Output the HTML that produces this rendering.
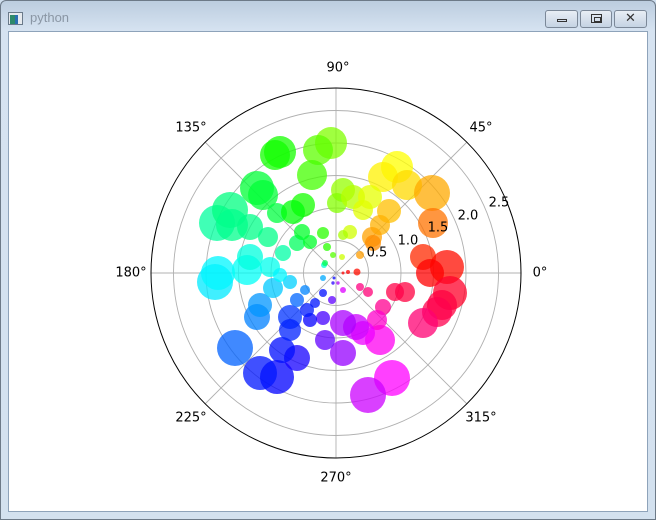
<!DOCTYPE html>
<html><head><style>
body{margin:0;width:656px;height:520px;overflow:hidden;background:#cfdeee;font-family:"DejaVu Sans","Liberation Sans",sans-serif}
.frame{position:absolute;left:0;top:0;width:654px;height:518px;border:1px solid #6d7a88;border-radius:6px 6px 0 0;background:linear-gradient(#bccddf,#d6e3f1 30px,#d3e1ef)}
.client{position:absolute;left:8px;top:31px;width:640px;height:481px;background:#fff;border:1px solid #8ea3ba;box-sizing:border-box}
.title{position:absolute;left:30px;top:10px;font:13px "Liberation Sans",sans-serif;color:#8a96a4}
.btn{position:absolute;top:10px;height:18px;border:1px solid #7b8898;border-radius:3px;background:linear-gradient(#e8eef5,#c5d3e3);box-sizing:border-box}
</style></head><body>
<div class="frame"></div>
<svg style="position:absolute;left:8px;top:12px" width="16" height="14"><rect x="0.5" y="0.5" width="14" height="12" fill="#e6eaee" stroke="#6a7a8a"/><rect x="2" y="3" width="5" height="9" fill="#2d8a6a"/><rect x="7" y="3" width="3" height="9" fill="#2a6fb0"/></svg>
<div class="title">python</div>
<div class="btn" style="left:545px;width:33px"><div style="position:absolute;left:11px;top:8px;width:10px;height:3px;border:1px solid #333;box-sizing:border-box"></div></div>
<div class="btn" style="left:580px;width:32px"><div style="position:absolute;left:10px;top:3px;width:11px;height:9px;border:1px solid #333;box-sizing:border-box"><div style="position:absolute;left:2px;top:2px;width:5px;height:3px;border:1px solid #333"></div></div></div>
<div class="btn" style="left:614px;width:33px;text-align:center;font:bold 13px 'DejaVu Sans';line-height:16px;color:#333">✕</div>
<div class="client"></div>
<svg style="position:absolute;left:0;top:0" width="656" height="520" font-family="DejaVu Sans, Liberation Sans, sans-serif" font-size="13">
<g fill="none" stroke="#b0b0b0" stroke-width="0.9">
<circle cx="336" cy="273" r="32.5"/><circle cx="336" cy="273" r="65"/><circle cx="336" cy="273" r="97.5"/><circle cx="336" cy="273" r="130"/><circle cx="336" cy="273" r="162.5"/>
<line x1="151" y1="273" x2="521" y2="273"/><line x1="336" y1="88" x2="336" y2="458"/>
<line x1="205" y1="142" x2="467" y2="404"/><line x1="205" y1="404" x2="467" y2="142"/>
</g>
<g>
<circle cx="280" cy="152" r="16" fill="hsla(115,100%,50%,.75)"/>
<circle cx="275" cy="155" r="15" fill="hsla(116,100%,50%,.75)"/>
<circle cx="331" cy="143" r="16" fill="hsla(90,100%,50%,.75)"/>
<circle cx="318" cy="150" r="15" fill="hsla(98,100%,50%,.75)"/>
<circle cx="312" cy="175" r="15" fill="hsla(104,100%,50%,.75)"/>
<circle cx="397" cy="167" r="16" fill="hsla(60,100%,50%,.75)"/>
<circle cx="383" cy="177" r="15" fill="hsla(57,100%,50%,.75)"/>
<circle cx="407" cy="185" r="15" fill="hsla(51,100%,50%,.75)"/>
<circle cx="432" cy="193" r="18" fill="hsla(40,100%,50%,.75)"/>
<circle cx="433" cy="223" r="15" fill="hsla(27,100%,50%,.75)"/>
<circle cx="389" cy="211" r="12" fill="hsla(45,100%,50%,.75)"/>
<circle cx="380" cy="225" r="10" fill="hsla(42,100%,50%,.75)"/>
<circle cx="372" cy="237" r="10" fill="hsla(38,100%,50%,.75)"/>
<circle cx="373" cy="243" r="8" fill="hsla(33,100%,50%,.75)"/>
<circle cx="423" cy="257" r="13" fill="hsla(10,100%,50%,.75)"/>
<circle cx="447" cy="267" r="17" fill="hsla(3,100%,50%,.75)"/>
<circle cx="430" cy="273" r="14" fill="hsla(0,100%,50%,.75)"/>
<circle cx="450" cy="293" r="17" fill="hsla(350,100%,50%,.75)"/>
<circle cx="442" cy="305" r="15" fill="hsla(345,100%,50%,.75)"/>
<circle cx="437" cy="312" r="15" fill="hsla(342,100%,50%,.75)"/>
<circle cx="423" cy="323" r="15" fill="hsla(333,100%,50%,.75)"/>
<circle cx="405" cy="292" r="10" fill="hsla(345,100%,50%,.75)"/>
<circle cx="395" cy="292" r="9" fill="hsla(343,100%,50%,.75)"/>
<circle cx="383" cy="307" r="8" fill="hsla(326,100%,50%,.75)"/>
<circle cx="380" cy="340" r="15" fill="hsla(303,100%,50%,.75)"/>
<circle cx="377" cy="320" r="10" fill="hsla(312,100%,50%,.75)"/>
<circle cx="392" cy="378" r="18" fill="hsla(300,100%,50%,.75)"/>
<circle cx="368" cy="395" r="18" fill="hsla(288,100%,50%,.75)"/>
<circle cx="363" cy="333" r="12" fill="hsla(296,100%,50%,.75)"/>
<circle cx="356" cy="327" r="13" fill="hsla(288,100%,50%,.75)"/>
<circle cx="343" cy="323" r="13" fill="hsla(280,100%,50%,.75)"/>
<circle cx="343" cy="353" r="13" fill="hsla(275,100%,50%,.75)"/>
<circle cx="325" cy="340" r="10" fill="hsla(263,100%,50%,.75)"/>
<circle cx="323" cy="318" r="7" fill="hsla(256,100%,50%,.75)"/>
<circle cx="332" cy="300" r="4" fill="hsla(262,100%,50%,.75)"/>
<circle cx="277" cy="377" r="17" fill="hsla(240,100%,50%,.75)"/>
<circle cx="260" cy="373" r="17" fill="hsla(235,100%,50%,.75)"/>
<circle cx="297" cy="358" r="13" fill="hsla(245,100%,50%,.75)"/>
<circle cx="282" cy="350" r="13" fill="hsla(237,100%,50%,.75)"/>
<circle cx="235" cy="348" r="18" fill="hsla(217,100%,50%,.75)"/>
<circle cx="290" cy="317" r="12" fill="hsla(228,100%,50%,.75)"/>
<circle cx="290" cy="330" r="11" fill="hsla(232,100%,50%,.75)"/>
<circle cx="310" cy="320" r="7" fill="hsla(241,100%,50%,.75)"/>
<circle cx="307" cy="310" r="7" fill="hsla(234,100%,50%,.75)"/>
<circle cx="257" cy="317" r="13" fill="hsla(210,100%,50%,.75)"/>
<circle cx="260" cy="305" r="12" fill="hsla(205,100%,50%,.75)"/>
<circle cx="297" cy="300" r="7" fill="hsla(216,100%,50%,.75)"/>
<circle cx="315" cy="303" r="5" fill="hsla(235,100%,50%,.75)"/>
<circle cx="323" cy="293" r="4" fill="hsla(237,100%,50%,.75)"/>
<circle cx="305" cy="290" r="5" fill="hsla(209,100%,50%,.75)"/>
<circle cx="215" cy="282" r="18" fill="hsla(185,100%,50%,.75)"/>
<circle cx="218" cy="273" r="17" fill="hsla(182,100%,50%,.75)"/>
<circle cx="247" cy="270" r="15" fill="hsla(178,100%,50%,.75)"/>
<circle cx="250" cy="257" r="13" fill="hsla(172,100%,50%,.75)"/>
<circle cx="270" cy="267" r="10" fill="hsla(176,100%,50%,.75)"/>
<circle cx="273" cy="288" r="10" fill="hsla(193,100%,50%,.75)"/>
<circle cx="290" cy="282" r="7" fill="hsla(191,100%,50%,.75)"/>
<circle cx="280" cy="275" r="7" fill="hsla(182,100%,50%,.75)"/>
<circle cx="323" cy="278" r="3" fill="hsla(200,100%,50%,.75)"/>
<circle cx="324" cy="265" r="3" fill="hsla(170,100%,50%,.75)"/>
<circle cx="217" cy="223" r="18" fill="hsla(157,100%,50%,.75)"/>
<circle cx="230" cy="210" r="18" fill="hsla(150,100%,50%,.75)"/>
<circle cx="232" cy="225" r="16" fill="hsla(153,100%,50%,.75)"/>
<circle cx="257" cy="188" r="17" fill="hsla(133,100%,50%,.75)"/>
<circle cx="263" cy="195" r="15" fill="hsla(133,100%,50%,.75)"/>
<circle cx="250" cy="227" r="13" fill="hsla(152,100%,50%,.75)"/>
<circle cx="277" cy="213" r="10" fill="hsla(135,100%,50%,.75)"/>
<circle cx="268" cy="237" r="10" fill="hsla(152,100%,50%,.75)"/>
<circle cx="283" cy="253" r="8" fill="hsla(159,100%,50%,.75)"/>
<circle cx="297" cy="243" r="8" fill="hsla(142,100%,50%,.75)"/>
<circle cx="302" cy="232" r="8" fill="hsla(130,100%,50%,.75)"/>
<circle cx="303" cy="205" r="12" fill="hsla(115,100%,50%,.75)"/>
<circle cx="293" cy="212" r="12" fill="hsla(122,100%,50%,.75)"/>
<circle cx="310" cy="242" r="7" fill="hsla(130,100%,50%,.75)"/>
<circle cx="323" cy="233" r="6" fill="hsla(110,100%,50%,.75)"/>
<circle cx="327" cy="247" r="4" fill="hsla(110,100%,50%,.75)"/>
<circle cx="333" cy="255" r="3" fill="hsla(100,100%,50%,.75)"/>
<circle cx="325" cy="263" r="3" fill="hsla(138,100%,50%,.75)"/>
<circle cx="343" cy="190" r="12" fill="hsla(85,100%,50%,.75)"/>
<circle cx="337" cy="203" r="10" fill="hsla(89,100%,50%,.75)"/>
<circle cx="353" cy="197" r="12" fill="hsla(77,100%,50%,.75)"/>
<circle cx="370" cy="197" r="12" fill="hsla(66,100%,50%,.75)"/>
<circle cx="363" cy="210" r="10" fill="hsla(67,100%,50%,.75)"/>
<circle cx="350" cy="232" r="7" fill="hsla(71,100%,50%,.75)"/>
<circle cx="343" cy="235" r="5" fill="hsla(80,100%,50%,.75)"/>
<circle cx="342" cy="257" r="3" fill="hsla(72,100%,50%,.75)"/>
<circle cx="360" cy="255" r="4" fill="hsla(37,100%,50%,.75)"/>
<circle cx="357" cy="272" r="3.5" fill="hsla(3,100%,50%,.75)"/>
<circle cx="348" cy="272" r="2" fill="hsla(0,100%,50%,.75)"/>
<circle cx="343" cy="273" r="1.5" fill="hsla(0,100%,50%,.75)"/>
<circle cx="360" cy="287" r="4" fill="hsla(330,100%,50%,.75)"/>
<circle cx="368" cy="292" r="5" fill="hsla(332,100%,50%,.75)"/>
<circle cx="343" cy="290" r="3" fill="hsla(292,100%,50%,.75)"/>
<circle cx="338" cy="283" r="1.7" fill="hsla(280,100%,50%,.75)"/>
<circle cx="333" cy="283" r="1.7" fill="hsla(250,100%,50%,.75)"/>
<circle cx="334" cy="278" r="1.5" fill="hsla(240,100%,50%,.75)"/>
</g>
<circle cx="336" cy="273" r="185" fill="none" stroke="#000" stroke-width="1"/>
<g fill="#000" text-anchor="middle" dominant-baseline="central">
<text x="338" y="68">90°</text><text x="481" y="128">45°</text><text x="191" y="128">135°</text>
<text x="131" y="273">180°</text><text x="540" y="273">0°</text><text x="191" y="418">225°</text>
<text x="336" y="478">270°</text><text x="481" y="418">315°</text>
<text x="377" y="253">0.5</text><text x="408" y="241">1.0</text><text x="438" y="228">1.5</text><text x="468" y="216">2.0</text><text x="499" y="203">2.5</text>
</g>
</svg>
</body></html>
